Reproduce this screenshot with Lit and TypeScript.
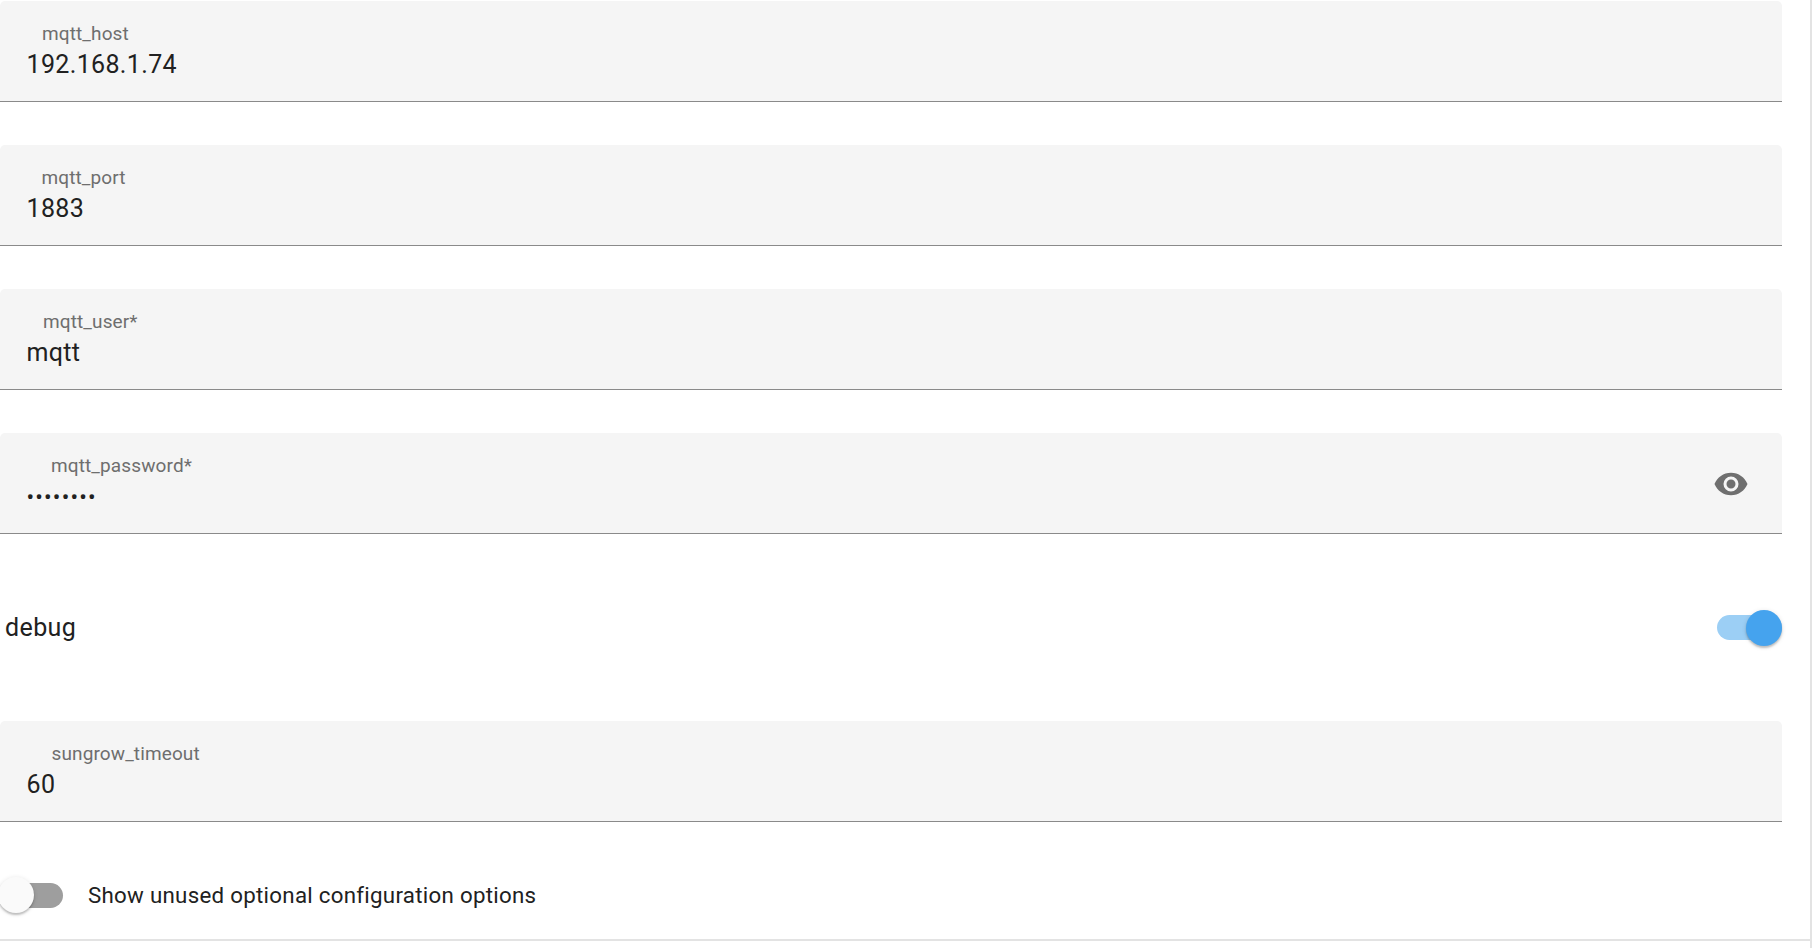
import { LitElement, html, css } from "lit";
import { customElement } from "lit/decorators.js";

const eye = html`<svg class="eye" viewBox="0 0 24 24"><path d="M12,9A3,3 0 0,0 9,12A3,3 0 0,0 12,15A3,3 0 0,0 15,12A3,3 0 0,0 12,9M12,17A5,5 0 0,1 7,12A5,5 0 0,1 12,7A5,5 0 0,1 17,12A5,5 0 0,1 12,17M12,4.5C7,4.5 2.73,7.61 1,12C2.73,16.39 7,19.5 12,19.5C17,19.5 21.27,16.39 23,12C21.27,7.61 17,4.5 12,4.5Z"/></svg>`;

const field = (label: string, value: string, labelX: number, password = false) => html`
  <div class="field">
    <div class="texts">
      <div class="label" style="padding-left:${labelX}px">${label}</div>
      <div class="value ${password ? "dots" : ""}">${value}</div>
    </div>
    ${password ? eye : ""}
  </div>`;

@customElement("app-root")
export class AppRoot extends LitElement {
  static styles = css`
    :host { display: block; height: 948px; overflow: hidden; background: #fff; font-family: Roboto, "Liberation Sans", sans-serif; }
    .page { display: flex; height: 948px; box-sizing: border-box; border-right: 2px solid #e3e3e3; }
    .main { width: 1810px; display: flex; flex-direction: column; }
    .form { width: 1782px; padding-top: 1px; display: flex; flex-direction: column; gap: 43px; }
    .field { height: 100px; box-sizing: content-box; display: flex; align-items: flex-start; justify-content: space-between; background: #f5f5f5; border-bottom: 1px solid #8a8a8a; border-radius: 5px 5px 0 0; padding: 0 0 0 26.5px; }
    .texts { display: flex; flex-direction: column; }
    .label { margin-top: 23px; font-size: 19px; line-height: 20px; color: #6e6e6e; letter-spacing: 0.12px; }
    .value { margin-top: 6px; font-size: 25px; line-height: 30px; color: #212121; letter-spacing: 0.35px; }
    .dots { letter-spacing: 1.2px; font-size: 22.5px; }
    .eye { width: 36px; height: 36px; fill: #6f6f6f; margin: 33px 33px 0 0; }
    .row { height: 101px; display: flex; align-items: center; justify-content: space-between; padding-left: 5px; font-size: 25px; letter-spacing: 0.4px; color: #212121; }
    .sw { position: relative; width: 65px; height: 25px; border-radius: 13px; }
    .sw.on { background: #9ccff5; }
    .sw.off { background: #9e9e9e; width: 65px; margin-left: -2px; margin-top: 1px; }
    .thumb { position: absolute; top: -5.5px; width: 36px; height: 36px; border-radius: 50%; box-shadow: 0 2px 2px rgba(0,0,0,.2), 0 1px 5px rgba(0,0,0,.12); }
    .on .thumb { right: 0; background: #45a3ee; }
    .off .thumb { left: 0; background: #fafafa; }
    .footer { width: 1810px; box-sizing: border-box; margin-top: 28px; height: 91px; display: flex; align-items: center; gap: 25px; border-bottom: 2px solid #e3e3e3; font-size: 22.3px; letter-spacing: 0.28px; color: #212121; }
  `;

  render() {
    return html`<div class="page"><div class="main">
      <div class="form">
        ${field("mqtt_host", "192.168.1.74", 15.5)}
        ${field("mqtt_port", "1883", 15)}
        ${field("mqtt_user*", "mqtt", 16.5)}
        ${field("mqtt_password*", "••••••••", 24.5, true)}
        <div class="row"><span>debug</span><div class="sw on"><div class="thumb"></div></div></div>
        ${field("sungrow_timeout", "60", 25)}
      </div>
      <div class="footer"><div class="sw off"><div class="thumb"></div></div><span>Show unused optional configuration options</span></div>
    </div></div>`;
  }
}
